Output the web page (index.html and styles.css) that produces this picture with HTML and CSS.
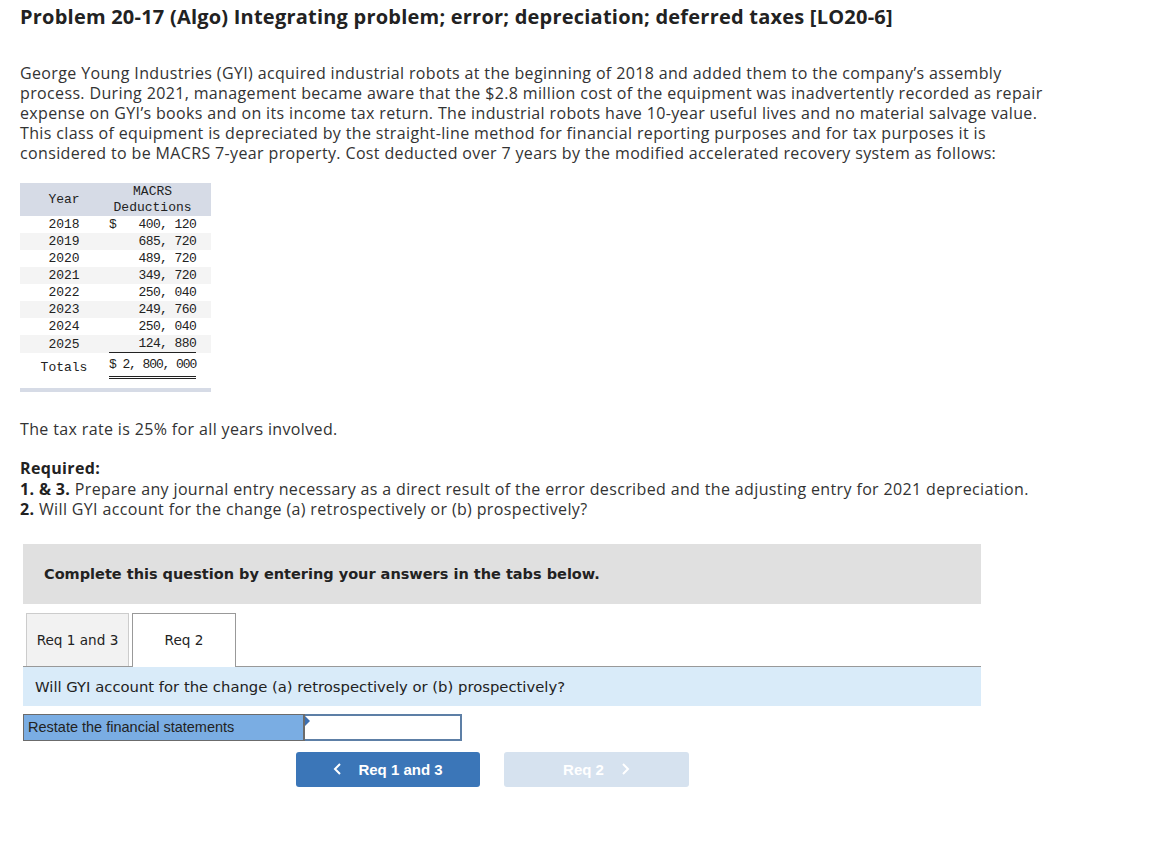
FILE: index.html
```html
<!DOCTYPE html>
<html>
<head>
<meta charset="utf-8">
<link rel="stylesheet" href="styles.css">
</head>
<body>
<div class="page">
  <h1 class="title">Problem 20-17 (Algo) Integrating problem; error; depreciation; deferred taxes [LO20-6]</h1>
  <p class="intro">George Young Industries (GYI) acquired industrial robots at the beginning of 2018 and added them to the company’s assembly process. During 2021, management became aware that the $2.8 million cost of the equipment was inadvertently recorded as repair expense on GYI’s books and on its income tax return. The industrial robots have 10-year useful lives and no material salvage value. This class of equipment is depreciated by the straight-line method for financial reporting purposes and for tax purposes it is considered to be MACRS 7-year property. Cost deducted over 7 years by the modified accelerated recovery system as follows:</p>

  <table class="macrs">
    <thead>
      <tr><th class="c-year">Year</th><th class="c-amt"><div class="amt-head">MACRS<br>Deductions</div></th></tr>
    </thead>
    <tbody>
      <tr><td class="c-year">2018</td><td class="c-amt"><div class="amt"><span>$</span><span class="num">400, 120</span></div></td></tr>
      <tr class="alt"><td class="c-year">2019</td><td class="c-amt"><div class="amt"><span></span><span class="num">685, 720</span></div></td></tr>
      <tr><td class="c-year">2020</td><td class="c-amt"><div class="amt"><span></span><span class="num">489, 720</span></div></td></tr>
      <tr class="alt"><td class="c-year">2021</td><td class="c-amt"><div class="amt"><span></span><span class="num">349, 720</span></div></td></tr>
      <tr><td class="c-year">2022</td><td class="c-amt"><div class="amt"><span></span><span class="num">250, 040</span></div></td></tr>
      <tr class="alt"><td class="c-year">2023</td><td class="c-amt"><div class="amt"><span></span><span class="num">249, 760</span></div></td></tr>
      <tr><td class="c-year">2024</td><td class="c-amt"><div class="amt"><span></span><span class="num">250, 040</span></div></td></tr>
      <tr class="alt"><td class="c-year">2025</td><td class="c-amt"><div class="amt single"><span></span><span class="num">124, 880</span></div></td></tr>
      <tr class="total"><td class="c-year">Totals</td><td class="c-amt"><div class="amt double"><span class="tot">$ 2, 800, 000</span></div></td></tr>
      <tr class="spacer"><td></td><td></td></tr>
    </tbody>
  </table>

  <p class="tax">The tax rate is 25% for all years involved.</p>

  <div class="required">
    <div class="req-head">Required:</div>
    <div><b>1. &amp; 3.</b> Prepare any journal entry necessary as a direct result of the error described and the adjusting entry for 2021 depreciation.</div>
    <div><b>2.</b> Will GYI account for the change (a) retrospectively or (b) prospectively?</div>
  </div>

  <div class="question">
    <div class="banner">Complete this question by entering your answers in the tabs below.</div>
    <div class="tabs">
      <div class="tab">Req 1 and 3</div>
      <div class="tab active">Req 2</div>
    </div>
    <div class="prompt">Will GYI account for the change (a) retrospectively or (b) prospectively?</div>
    <div class="answer-row">
      <div class="selected">Restate the financial statements</div>
      <div class="input"><span class="corner"></span></div>
    </div>
    <div class="nav">
      <div class="btn prev">
        <svg class="chev" width="10" height="14" viewBox="0 0 10 14"><polyline points="7,2 2,7 7,12" fill="none" stroke="#fff" stroke-width="2"/></svg>
        <span>Req 1 and 3</span>
      </div>
      <div class="btn next">
        <span>Req 2</span>
        <svg class="chev" width="10" height="14" viewBox="0 0 10 14"><polyline points="3,2 8,7 3,12" fill="none" stroke="#fff" stroke-width="2"/></svg>
      </div>
    </div>
  </div>
</div>
</body>
</html>
```
FILE: styles.css
```css
html, body {
  margin: 0;
  padding: 0;
  background: #fff;
}
.page {
  padding: 5px 0 0 20px;
  font-family: "Open Sans", sans-serif;
  color: #333;
}
.title {
  margin: 0;
  font-size: 20px;
  line-height: 24px;
  font-weight: 700;
  letter-spacing: 0.22px;
  color: #222;
}
.intro {
  margin: 34px 0 0;
  width: 1050px;
  font-size: 16px;
  line-height: 20px;
  letter-spacing: 0.36px;
}
.macrs {
  margin-top: 20px;
  border-collapse: collapse;
  font-family: "Liberation Mono", monospace;
  font-size: 13px;
  color: #222;
  border-bottom: 4px solid #d6dbe6;
}
.macrs th {
  background: #d6dbe6;
  font-weight: normal;
  line-height: 16px;
  padding: 1px 0 0;
  height: 32px;
  vertical-align: middle;
}
.macrs td {
  padding: 0;
  line-height: 17px;
  height: 17px;
}
.c-year {
  width: 88px;
  text-align: center;
}
.c-amt {
  width: 103px;
  padding: 0 15px 0 1px !important;
  box-sizing: border-box;
}
.amt-head {
  text-align: center;
}
.amt {
  display: flex;
  justify-content: space-between;
  white-space: nowrap;
}
.num {
  letter-spacing: -0.6px;
}
.tot {
  letter-spacing: -1.1px;
}
.alt td {
  background: #f4f4f4;
}
.amt.single {
  border-bottom: 1px solid #222;
}
.total td {
  height: 25px;
  line-height: 22px;
  padding-top: 2px;
}
.amt.double {
  border-bottom: 3px double #222;
  justify-content: flex-start;
}
.spacer td {
  height: 8px;
}
.tax {
  margin: 27px 0 0;
  font-size: 16px;
  line-height: 20px;
  letter-spacing: 0.36px;
}
.required {
  margin-top: 19px;
  font-size: 16px;
  line-height: 20.5px;
  letter-spacing: 0.36px;
}
.req-head, .required b {
  font-weight: 700;
  color: #222;
}
.question {
  margin-top: 24px;
  margin-left: 3px;
  width: 958px;
  font-family: "DejaVu Sans", Verdana, sans-serif;
  color: #222;
}
.banner {
  background: #e0e0e0;
  height: 60px;
  padding-left: 21px;
  display: flex;
  align-items: center;
  font-size: 14.5px;
  font-weight: 700;
}
.tabs {
  margin-top: 9px;
  display: flex;
  gap: 3px;
  padding-left: 3px;
  border-bottom: 1px solid #999;
  height: 53px;
}
.tab {
  width: 103px;
  height: 53px;
  box-sizing: border-box;
  border: 1px solid #ccc;
  border-bottom: none;
  background: #f2f2f2;
  display: flex;
  align-items: center;
  justify-content: center;
  font-size: 13.6px;
}
.tab.active {
  width: 104px;
  height: 54px;
  background: #fff;
  border-color: #999;
}
.prompt {
  background: #d9ebf9;
  height: 39px;
  padding-left: 12px;
  display: flex;
  align-items: center;
  font-size: 14.8px;
}
.answer-row {
  margin-top: 8px;
  display: flex;
  height: 27px;
}
.selected {
  width: 282px;
  box-sizing: border-box;
  background: #7aade3;
  border: 1px solid #6b6b6b;
  border-right: 2px solid #6b6b6b;
  padding-left: 4px;
  display: flex;
  align-items: center;
  font-family: "Liberation Sans", Arial, sans-serif;
  font-size: 14.5px;
  color: #222;
}
.input {
  position: relative;
  width: 157px;
  box-sizing: border-box;
  border: 2px solid #5d7fa6;
  border-left: none;
  background: #fff;
}
.corner {
  position: absolute;
  left: 0;
  top: 0;
  width: 0;
  height: 0;
  border-top: 5px solid transparent;
  border-bottom: 5px solid transparent;
  border-left: 5px solid #3d6fb0;
}
.nav {
  margin-top: 11px;
  padding-left: 273px;
  display: flex;
  gap: 24px;
}
.btn {
  width: 184px;
  height: 35px;
  border-radius: 3px;
  display: flex;
  align-items: center;
  justify-content: center;
  gap: 15px;
  font-family: "Liberation Sans", Arial, sans-serif;
  font-weight: 700;
  font-size: 15px;
  color: #fff;
}
.btn.prev {
  background: #3b76b8;
}
.btn.next {
  width: 185px;
  background: #d6e2ef;
  gap: 16px;
}
.chev {
  display: block;
}
```
